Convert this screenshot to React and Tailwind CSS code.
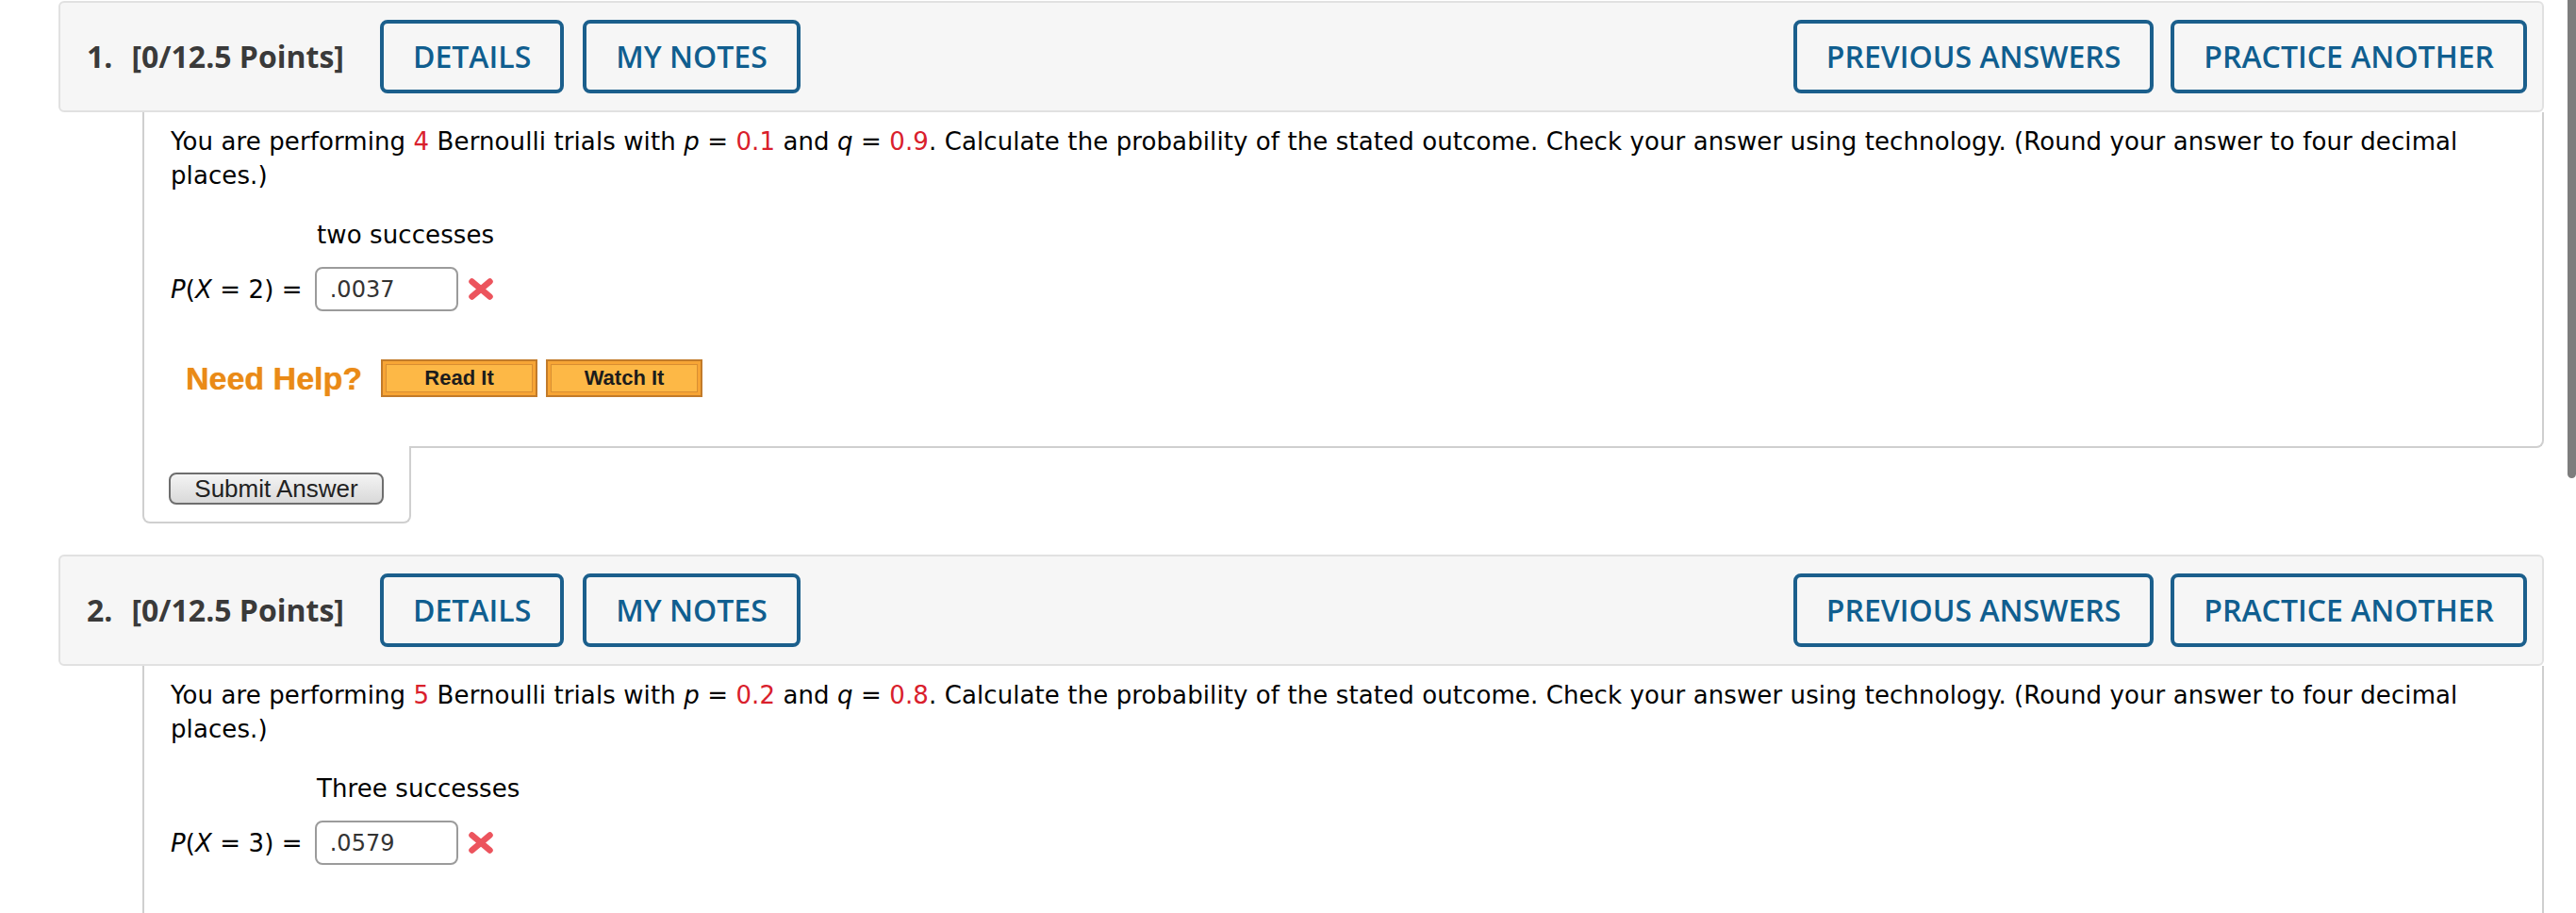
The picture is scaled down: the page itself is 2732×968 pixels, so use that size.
import React from 'react';

const openSans = { fontFamily: '"Open Sans", "Liberation Sans", sans-serif' };

function HeadButton({ children }) {
    return (
        <div className="flex h-[78px] items-center rounded-[8px] border-[4px] border-[#1b5f8c] px-[31px] text-[32px] font-semibold leading-none text-[#105e8f]">
            {children}
        </div>
    );
}

function Header({ num }) {
    return (
        <div
            style={openSans}
            className="flex h-[118px] items-center justify-between rounded-[6px] border-2 border-[#e1e1e1] bg-[#f6f6f6] pl-[28px] pr-[16px]"
        >
            <div className="flex items-center">
                <span className="text-[32px] font-bold text-[#3a3a3a]">{num}.</span>
                <span className="ml-[20px] text-[32px] font-bold text-[#3a3a3a]">[0/12.5 Points]</span>
                <div className="ml-[38px] flex gap-[20px]">
                    <HeadButton>DETAILS</HeadButton>
                    <HeadButton>MY NOTES</HeadButton>
                </div>
            </div>
            <div className="flex gap-[18px]">
                <HeadButton>PREVIOUS ANSWERS</HeadButton>
                <HeadButton>PRACTICE ANOTHER</HeadButton>
            </div>
        </div>
    );
}

function WrongMark() {
    return (
        <svg width="28" height="25" viewBox="0 0 28 25" className="ml-[10px]">
            <g stroke="#ec4b55" strokeWidth="6.5" strokeLinecap="round" opacity="0.95">
                <line x1="4.5" y1="4.5" x2="23.5" y2="20.5" />
                <line x1="23.5" y1="4.5" x2="4.5" y2="20.5" />
            </g>
        </svg>
    );
}

function HelpButton({ children }) {
    return (
        <div className="h-[40px] w-[166px] border-2 border-[#c27b2a] bg-[#f7a535] p-[3px]">
            <div className="flex h-full items-center justify-center border border-[#d88e32] bg-[#fdb846] font-['Liberation_Sans',Arial,sans-serif] text-[22px] font-bold leading-none text-[#1c1c1c]">
                {children}
            </div>
        </div>
    );
}

function Red({ children }) {
    return <span className="text-[#d9202c]">{children}</span>;
}

function Question({ num, n, p, q, outcome, x, answer, showHelp }) {
    return (
        <div>
            <Header num={num} />
            <div className="ml-[89px] min-h-[300px] rounded-br-[8px] border-x-2 border-b-2 border-[#cfcfcf] pb-[52px] pl-[28px] pr-[30px] pt-[13px] font-['DejaVu_Sans',Verdana,sans-serif] text-[26px] leading-[36px] tracking-[0.1px] text-black">
                <p>
                    You are performing <Red>{n}</Red> Bernoulli trials with <i>p</i> = <Red>{p}</Red> and <i>q</i> = <Red>{q}</Red>. Calculate the probability of the stated outcome. Check your answer using technology. (Round your answer to four decimal places.)
                </p>
                <div className="mt-[27px] pl-[155px]">{outcome}</div>
                <div className="mt-[16px] flex h-[47px] items-center">
                    <span>
                        <i>P</i>(<i>X</i> = {x}) =
                    </span>
                    <div className="ml-[13px] flex h-[47px] w-[152px] items-center rounded-[8px] border-2 border-[#9b9b9b] bg-white pl-[14px] text-[24px] tracking-normal text-[#333]">
                        {answer}
                    </div>
                    <WrongMark />
                </div>
                {showHelp && (
                    <div className="mt-[51px] flex h-[40px] items-center pl-[16px]">
                        <span className="font-['Liberation_Sans',Arial,sans-serif] text-[34px] font-bold leading-none tracking-normal text-[#ea8a16] [text-shadow:0_0_1px_#f0a040]">
                            Need Help?
                        </span>
                        <div className="ml-[20px] flex gap-[9px] tracking-normal">
                            <HelpButton>Read It</HelpButton>
                            <HelpButton>Watch It</HelpButton>
                        </div>
                    </div>
                )}
            </div>
            {showHelp && (
                <div className="-mt-[2px] ml-[89px] w-[285px] rounded-b-[8px] border-x-2 border-b-2 border-[#cfcfcf] bg-white pb-[18px] pl-[26px] pt-[28px]">
                    <div className="flex h-[34px] w-[228px] items-center justify-center rounded-[8px] border-2 border-[#6e6e6e] bg-gradient-to-b from-[#f4f4f4] to-[#d9d9d9] font-['Liberation_Sans',Arial,sans-serif] text-[26px] leading-none text-[#222]">
                        Submit Answer
                    </div>
                </div>
            )}
        </div>
    );
}

export default function App() {
    return (
        <div className="relative h-[968px] w-[2732px] overflow-hidden bg-white">
            <div className="pl-[62px] pr-[34px] pt-[1px]">
                <Question num={1} n={4} p="0.1" q="0.9" outcome="two successes" x={2} answer=".0037" showHelp />
                <div className="mt-[33px]">
                    <Question num={2} n={5} p="0.2" q="0.8" outcome="Three successes" x={3} answer=".0579" showHelp={false} />
                </div>
            </div>
            <div className="absolute right-0 top-0 h-[507px] w-[9px] rounded-b-[5px] bg-[#7d7d7d]" />
        </div>
    );
}
